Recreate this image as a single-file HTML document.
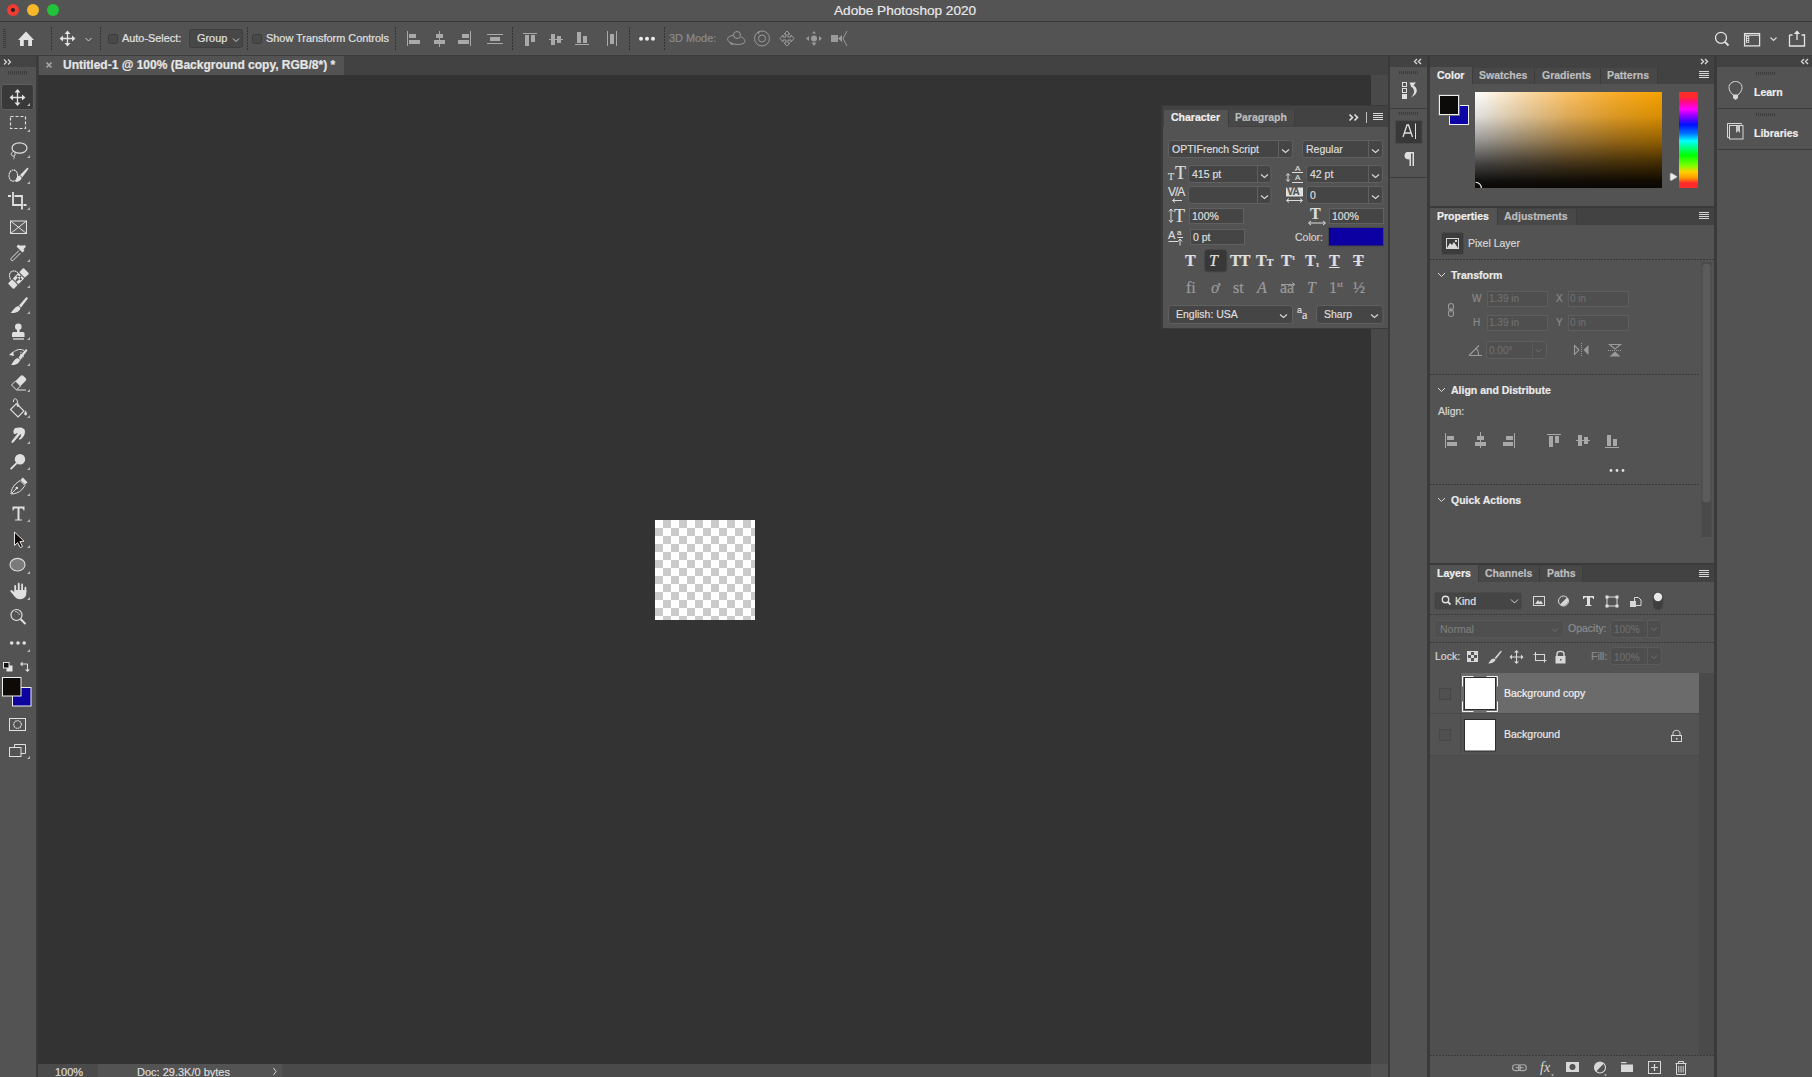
<!DOCTYPE html>
<html><head><meta charset="utf-8">
<style>
*{box-sizing:border-box;margin:0;padding:0}
html,body{width:1812px;height:1077px;overflow:hidden;background:#535353;font-family:"Liberation Sans",sans-serif;color:#d8d8d8}
.a{position:absolute}
.t{position:absolute;white-space:nowrap;font-size:11px;line-height:12px;z-index:2;-webkit-text-stroke:0.2px currentColor}
svg{position:absolute;overflow:visible}
</style></head><body>
<!-- title bar -->
<div class="a" style="left:0;top:0;width:1812px;height:21px;background:#545454"></div>
<div class="a" style="left:0;top:21px;width:1812px;height:1px;background:#383838"></div>
<div class="a" style="left:7px;top:4px;width:12px;height:12px;border-radius:50%;background:#f03c33"></div>
<div class="a" style="left:11px;top:8px;width:4px;height:4px;border-radius:50%;background:#222"></div>
<div class="a" style="left:27px;top:4px;width:12px;height:12px;border-radius:50%;background:#f6b72b"></div>
<div class="a" style="left:47px;top:4px;width:12px;height:12px;border-radius:50%;background:#22c23b"></div>
<div class="t" style="left:834px;top:4px;font-size:13.6px;line-height:14px;color:#e8e8e8">Adobe Photoshop 2020</div>

<!-- options bar -->
<div class="a" style="left:0;top:22px;width:1812px;height:33px;background:#535353"></div>
<div class="a" style="left:0;top:55px;width:1812px;height:1px;background:#3c3c3c"></div>


<!-- options content -->
<svg width="1812" height="34" style="left:0;top:22px" viewBox="0 22 1812 34">
<g fill="#3b3b3b"><rect x="3" y="29" width="3" height="1"/><rect x="3" y="31" width="3" height="1"/><rect x="3" y="33" width="3" height="1"/><rect x="3" y="35" width="3" height="1"/><rect x="3" y="37" width="3" height="1"/><rect x="3" y="39" width="3" height="1"/><rect x="3" y="41" width="3" height="1"/><rect x="3" y="43" width="3" height="1"/><rect x="3" y="45" width="3" height="1"/><rect x="3" y="47" width="3" height="1"/></g>
<path d="M26 31.5 L34 40 L32 40 L32 46 L28.2 46 L28.2 40 L23.8 40 L23.8 46 L20 46 L20 40 L18 40 Z" fill="#e2e2e2"/>
<g stroke="#333" stroke-width="1" stroke-dasharray="2 1"><line x1="51.5" y1="27" x2="51.5" y2="50"/><line x1="100.5" y1="27" x2="100.5" y2="50"/><line x1="247.5" y1="27" x2="247.5" y2="50"/><line x1="395.5" y1="27" x2="395.5" y2="50"/><line x1="512.5" y1="27" x2="512.5" y2="50"/><line x1="629.5" y1="27" x2="629.5" y2="50"/><line x1="664.5" y1="27" x2="664.5" y2="50"/></g>
<g fill="none" stroke="#e2e2e2" stroke-width="1.3"><path d="M67.5 32 V45 M61 38.5 H74"/></g>
<g fill="#e2e2e2"><path d="M67.5 30.5 L70.5 34 L64.5 34Z M67.5 46.5 L70.5 43 L64.5 43Z M59.5 38.5 L63 35.5 L63 41.5Z M75.5 38.5 L72 35.5 L72 41.5Z"/></g>
<path d="M85.5 38 L88.5 41 L91.5 38" fill="none" stroke="#d0d0d0" stroke-width="1"/>
<rect x="108.5" y="34.5" width="9" height="9" rx="2" fill="#4a4a4a" stroke="#3a3a3a"/>
<rect x="189.5" y="29.5" width="53" height="18" rx="2" fill="#474747" stroke="#3f3f3f"/>
<path d="M233 38.5 L236 41.5 L239 38.5" fill="none" stroke="#d0d0d0" stroke-width="1"/>
<rect x="252.5" y="34.5" width="9" height="9" rx="2" fill="#4a4a4a" stroke="#3a3a3a"/>
<g fill="#a9a9a9">
<rect x="407" y="31" width="1" height="15"/><rect x="409" y="34" width="7" height="4"/><rect x="409" y="40" width="11" height="4"/>
<rect x="439" y="31" width="1" height="16"/><rect x="436" y="34" width="7" height="4"/><rect x="434" y="40" width="11" height="4"/>
<rect x="470" y="31" width="1" height="15"/><rect x="462" y="34" width="7" height="4"/><rect x="458" y="40" width="11" height="4"/>
<rect x="487" y="34" width="16" height="1"/><rect x="487" y="43" width="16" height="1"/><rect x="490" y="37" width="10" height="4"/>
<rect x="523" y="33" width="14" height="1"/><rect x="525" y="35" width="4" height="11"/><rect x="531" y="35" width="4" height="7"/>
<rect x="549" y="39" width="14" height="1"/><rect x="551" y="34" width="4" height="11"/><rect x="557" y="36" width="4" height="7"/>
<rect x="575" y="44" width="14" height="1"/><rect x="577" y="32" width="4" height="11"/><rect x="583" y="36" width="4" height="7"/>
<rect x="607" y="31" width="1" height="15"/><rect x="616" y="31" width="1" height="15"/><rect x="610" y="34" width="4" height="10"/>
</g>
<g fill="#ececec"><circle cx="641" cy="38.8" r="2"/><circle cx="647" cy="38.8" r="2"/><circle cx="653" cy="38.8" r="2"/></g>
<g fill="none" stroke="#9a9a9a" stroke-width="1">
<circle cx="737" cy="35" r="3.5"/><path d="M733 35.5 C727 36 726 40 730 42.5 C733 45 742 45 744 43 C746 41 744 38 741 37"/>
<circle cx="762" cy="38.5" r="7.5"/><circle cx="762" cy="38.5" r="3.5"/>
<path d="M787 31 L790 34 H788 V37 H791 V35 L794 38.5 L791 42 V40 H788 V43 H790 L787 46 L784 43 H786 V40 H783 V42 L780 38.5 L783 35 V37 H786 V34 H784 Z"/>
<path d="M847 31 L843 38.5 L847 46"/>
</g>
<g fill="#9a9a9a"><path d="M730 42 L734 44 L731 45Z"/><path d="M757 33 L760 31 L759 34Z"/><circle cx="814" cy="38.5" r="3"/><path d="M814 31 L816 33.5 H812Z M814 46 L816.5 42.5 H811.5Z M806 38.5 L809 36 V41Z M822 38.5 L819 36 V41Z"/><rect x="831" y="35" width="7" height="7"/><path d="M838 38.5 L842 35 V42Z"/></g>
<g fill="none" stroke="#e2e2e2" stroke-width="1.3"><circle cx="1721" cy="37.8" r="5.5"/><path d="M1725 42 L1728.5 45.5" stroke-width="1.8"/>
<rect x="1744.6" y="33.6" width="15" height="12.3"/><path d="M1745 35.3 H1759.5" stroke-width="1"/>
<path d="M1789.5 35 V46 H1804.5 V35 H1801.5 M1792.5 35 H1789.5"/><path d="M1797 40 V31"/></g>
<path d="M1793.8 34 L1797 30.5 L1800.2 34Z" fill="#e2e2e2"/>
<path d="M1770.5 37.5 L1773.5 40.5 L1776.5 37.5" fill="none" stroke="#d8d8d8" stroke-width="1.2"/><rect x="1746" y="36" width="3.2" height="6.8" fill="#e0e0e0"/><g fill="#535353"><circle cx="1747.6" cy="37.4" r="0.75"/><circle cx="1747.6" cy="39.4" r="0.75"/><circle cx="1747.6" cy="41.4" r="0.75"/></g>
</svg>
<div class="t" style="left:122px;top:32px;font-size:10.9px;color:#e0e0e0">Auto-Select:</div>
<div class="t" style="left:197px;top:32px;font-size:10.9px;color:#e0e0e0">Group</div>
<div class="t" style="left:266px;top:32px;font-size:10.9px;color:#e0e0e0">Show Transform Controls</div>
<div class="t" style="left:669px;top:32px;font-size:10.9px;color:#8c8c8c">3D Mode:</div>

<!-- row below options -->
<div class="a" style="left:0;top:56px;width:1812px;height:19px;background:#424242"></div>

<!-- left toolbar -->
<div class="a" style="left:0;top:56px;width:36px;height:11px;background:#444"></div>
<div class="a" style="left:0;top:67px;width:36px;height:1010px;background:#535353"></div>
<div class="a" style="left:36px;top:56px;width:2px;height:1021px;background:#3a3a3a"></div>


<!-- toolbar content -->
<svg width="38" height="1021" style="left:0;top:56px" viewBox="0 56 38 1021">
<path d="M4 59.5 L6.5 62 L4 64.5 M8 59.5 L10.5 62 L8 64.5" fill="none" stroke="#d8d8d8" stroke-width="1.2"/>
<g fill="#3c3c3c"><rect x="8" y="71" width="1" height="3.5"/><rect x="10" y="71" width="1" height="3.5"/><rect x="12" y="71" width="1" height="3.5"/><rect x="14" y="71" width="1" height="3.5"/><rect x="16" y="71" width="1" height="3.5"/><rect x="18" y="71" width="1" height="3.5"/><rect x="20" y="71" width="1" height="3.5"/><rect x="22" y="71" width="1" height="3.5"/><rect x="24" y="71" width="1" height="3.5"/><rect x="26" y="71" width="1" height="3.5"/></g>
<rect x="1.5" y="84.5" width="32" height="25" rx="2.5" fill="#393939" stroke="#5e5e5e"/>
<path d="M27 106 L30 103 L30 106Z M27 132 L30 129 L30 132Z M27 158 L30 155 L30 158Z M27 184 L30 181 L30 184Z M27 210 L30 207 L30 210Z M27 262 L30 259 L30 262Z M27 288 L30 285 L30 288Z M27 314 L30 311 L30 314Z M27 340 L30 337 L30 340Z M27 366 L30 363 L30 366Z M27 392 L30 389 L30 392Z M27 418 L30 415 L30 418Z M27 444 L30 441 L30 444Z M27 470 L30 467 L30 470Z M27 496 L30 493 L30 496Z M27 522 L30 519 L30 522Z M27 548 L30 545 L30 548Z M27 574 L30 571 L30 574Z M27 600 L30 597 L30 600Z M27 652 L30 649 L30 652Z M27 759 L30 756 L30 759Z" fill="#b8b8b8"/>
<g fill="none" stroke="#e0e0e0" stroke-width="1.3">
<path d="M17.5 91 V104 M11 97.5 H24"/>
<rect x="10.5" y="116.5" width="15" height="12" stroke-dasharray="3 2" stroke-width="1.2"/>
<ellipse cx="19.5" cy="148" rx="7.5" ry="5.2" stroke-width="1.2"/><path d="M13.5 151.5 C10.5 152.5 10.5 156 13.5 156 C15.5 156 15.5 154 14.5 153 M13.8 156 C14.5 157 14.5 158.5 13.5 159" stroke-width="1"/>
<ellipse cx="13.3" cy="175.6" rx="4.3" ry="5.6" stroke-dasharray="0.9 1.5" stroke-width="1.2" stroke-linecap="round"/>
<path d="M8 196 H11 M13 192 V205 H21.5 M14.5 196 H22 V209.5 M23.5 205 H26.5" stroke-width="1.8"/>
<rect x="10.5" y="221" width="16" height="12.5" fill="#5c5c5c" stroke-width="1"/><path d="M10.5 221 L26.5 233.5 M26.5 221 L10.5 233.5" stroke-width="1"/>
<path d="M19 250.5 L11.5 258 C10 259.5 11.5 261.5 13 260.5 L20.5 253" stroke-width="1"/>
<path d="M10.5 279 C8.5 276 9.5 271.5 13 271 C15 270.8 16.5 271.5 17.5 272.5" stroke-dasharray="0.9 1.5" stroke-width="1.2" stroke-linecap="round"/>
<path d="M24 350.5 C21 348.5 16 349.5 13 352.5" stroke-width="1"/>
<path d="M13 349 V362" stroke="none"/>
<path d="M21 352 L20 360 M23.5 356 L22 358" stroke-dasharray="0.8 1.6" stroke-width="1.1" stroke-linecap="round" stroke="#d0d0d0"/>
<path d="M11.5 385 L15.5 381 L20.5 386 L16.5 390 Z M16.5 390 H26" stroke-width="1"/>
<path d="M10.5 409.5 L16.5 403.5 L24 411 L18 417 Z" stroke-width="1.1"/><path d="M13.5 402 C13 399 15.5 397.5 17 400 L18 404" stroke-width="1"/>
<path d="M11 494 C11 490 13 486.5 15.5 484 L20 480.5 L25 485.5 L21.5 490 C19 492.5 15 494 11 494Z M11.5 493.5 L17.5 487.5" stroke-width="1"/>
<circle cx="16.5" cy="615" r="5.5" stroke-width="1.2"/><path d="M20.5 619 L25.5 624" stroke-width="2"/><path d="M15 611.5 C17 611.5 19 613 19.5 615" stroke-width="0.8"/>
<rect x="9.5" y="718.5" width="16" height="12" stroke-width="1"/><circle cx="17.5" cy="724.5" r="3.8" stroke-dasharray="0.8 1.4" stroke-width="1.1" stroke-linecap="round"/>
<path d="M14.5 747 V744.5 H25.5 V753.5 H21" stroke-width="1"/><rect x="9.5" y="747.5" width="11.5" height="9" stroke-width="1"/>
<path d="M21 664 H27.5 V670" stroke-width="1"/>
</g>
<g fill="#e0e0e0">
<path d="M17.5 89 L20.5 92.5 H14.5Z M17.5 106 L20.5 102.5 H14.5Z M9.5 97.5 L13 94.5 V100.5Z M25.5 97.5 L22 94.5 V100.5Z"/>
<path d="M26.8 168.2 C27.8 167.2 29 168.6 28 169.6 L22.3 177.2 L20 175 Z M19.5 175.5 L21.8 177.8 C21 181 18 182.3 15.5 181.8 C16 179.5 17 176 19.5 175.5Z"/>
<path d="M24 245.5 C25 244.5 26.5 246 25.5 247 L23.5 249.5 L24.5 250.5 L22.5 252.5 L16.5 246.5 L18.5 244.5 L19.5 245.5Z"/>
<g transform="rotate(-45 18.5 278.5)"><rect x="7.5" y="274.5" width="6" height="8" rx="1"/><rect x="23.5" y="274.5" width="6" height="8" rx="1"/><path d="M14.5 274.5 H22.5 V282.5 H14.5Z M16.5 277.5 V279.5 H18.5 V277.5Z M18.5 279.5 V281.5 H20.5 V279.5Z M18.5 275.5 V277.5 H20.5 V275.5Z M20.5 277.5 V279.5 H22 V277.5Z M15 277.5 V279.5 H16.5 V277.5Z" fill-rule="evenodd"/></g>
<path d="M26 297.5 C27 296.5 28.5 298 27.5 299 L21 307.5 L19 305.5 Z M18.5 306 L20.5 308 C20 311.5 15.5 313.5 10.5 313 C13 311 14 307 18.5 306Z"/>
<circle cx="18.3" cy="326.8" r="3.3"/><rect x="17" y="329" width="2.6" height="4"/><path d="M12 333.5 C12 332.5 13 332 14 332 H22.5 C23.5 332 24.5 332.5 24.5 333.5 V337 H12Z"/><rect x="13" y="338.3" width="11" height="1.3"/>
<path d="M25.5 349.5 C26.5 348.5 28 350 27 351 L20.5 359.5 L18.5 357.5 Z M18 358 L20 360 C19.5 363.5 15 365.5 11 365 C13 363 13.5 359 18 358Z"/>
<path d="M9 355 L13 351.5 L14 356 Z"/>
<path d="M15.5 381 L20.5 376 C21.5 375 22.5 375 23.5 376 L25.5 378 C26.5 379 26.5 380 25.5 381 L20.5 386 Z"/>
<path d="M25.5 410.5 C27 412.5 27.5 414 26.5 415 C25.5 416 24 415 24.2 413.5 Z"/><circle cx="18" cy="405.5" r="1.3"/>
<path d="M15.5 428 C18 427 23 427 24.5 429.5 C26 432.5 24 437 21 439 C19.5 440 18.5 439.5 19 438.5 C21 437 21.5 434.5 20.5 434 L15.5 440 C13.5 442.5 12 443.5 11.5 442.5 C11 441.5 12.5 440 14.5 437.5 L18 433 C16.5 433 15 434.5 14.5 434 C13 433.5 13 429 15.5 428Z"/>
<circle cx="20" cy="459.2" r="5.2"/><path d="M16 462.5 L10 468.5 L11.3 469.8 L17.3 463.8Z"/>
<path d="M20.5 480 L22.8 477.5 L27.5 482.2 L25 484.5Z"/>
<circle cx="16.8" cy="488" r="1.3"/>
<path d="M12.5 506.5 H24.5 V510.5 H23.5 C23.2 509 22.5 508.5 21.5 508.5 H19.5 V519.5 H22 V520.5 H15 V519.5 H17.5 V508.5 H15.5 C14.5 508.5 13.8 509 13.5 510.5 H12.5Z"/>
<path d="M14.2 590 H26.3 V593 C26.3 597 23.6 599.2 20.2 599.2 C17 599.2 15 597.5 13 594.5 L10.5 591.5 C10 590.5 11 589.5 12 590.2 L14.2 592Z"/><path d="M14.3 590 V586.2 C14.3 584.6 16.1 584.6 16.1 586.2 V591 Z M17.8 590 V584 C17.8 582.4 19.7 582.4 19.7 584 V591Z M21.2 590 V584.8 C21.2 583.2 23 583.2 23 584.8 V591Z M24.5 591 V588 C24.5 586.4 26.3 586.4 26.3 588 V592Z"/>
<circle cx="11.7" cy="643" r="1.8"/><circle cx="18" cy="643" r="1.8"/><circle cx="24.2" cy="643" r="1.8"/>
<path d="M20 664 L22.5 661.5 V666.5Z M27.5 672 L25 669.5 H30Z"/>
</g>
<path d="M14.5 532 V545.5 L17.6 542.6 L20.3 547.6 L22.5 546.5 L19.9 541.6 L24 541.2Z" fill="#0f0c0a" stroke="#e6e6e6" stroke-width="1" stroke-linejoin="round"/>
<ellipse cx="17.5" cy="564.7" rx="7.5" ry="6.3" fill="#7a7a7a" stroke="#dcdcdc" stroke-width="1.1"/>
<rect x="6.5" y="665.5" width="6" height="6" fill="#e4e4e4"/><rect x="3.5" y="662.5" width="5.5" height="5.5" fill="#111" stroke="#e4e4e4"/>
<rect x="12.5" y="687.5" width="18.5" height="18.5" fill="#0d04a0" stroke="#eeeeee"/>
<rect x="2.5" y="677.5" width="18.5" height="18.5" fill="#0d0a08" stroke="#f0f0f0"/>
</svg>

<!-- doc tab -->
<div class="a" style="left:39px;top:56px;width:305px;height:19px;background:#535353"></div>

<!-- canvas -->
<div class="a" style="left:38px;top:75px;width:1333px;height:989px;background:#333333"></div>
<div class="a" style="left:1371px;top:75px;width:17px;height:989px;background:#494949"></div>
<svg width="10" height="10" style="left:44px;top:60px" viewBox="44 60 10 10"><path d="M46.5 62.5 L51.5 67.5 M51.5 62.5 L46.5 67.5" stroke="#a8a8a8" stroke-width="1.6"/></svg>
<div class="t" style="left:63px;top:59px;font-size:12px;font-weight:bold;color:#e6e6e6">Untitled-1 @ 100% (Background copy, RGB/8*) *</div>
<div class="a" style="left:655px;top:520px;width:100px;height:100px;background:repeating-conic-gradient(#cbcbcb 0 25%,#ffffff 0 50%) 0 0/16px 16px"></div>

<!-- status bar -->
<div class="a" style="left:38px;top:1064px;width:1350px;height:13px;background:#4a4a4a"></div>

<div class="a" style="left:98px;top:1064px;width:184px;height:13px;background:#535353"></div><div class="a" style="left:1371px;top:1064px;width:17px;height:13px;background:#525252"></div>
<div class="t" style="left:55px;top:1066px;font-size:11px;color:#dcdcdc">100%</div>
<div class="t" style="left:137px;top:1066px;font-size:11px;color:#dcdcdc">Doc: 29.3K/0 bytes</div>
<svg width="10" height="13" style="left:270px;top:1064px" viewBox="270 1064 10 13"><path d="M273.5 1068 L276 1071.5 L273.5 1075" fill="none" stroke="#cfcfcf" stroke-width="1"/></svg>
<div class="a" style="left:1388px;top:56px;width:2px;height:1021px;background:#3a3a3a"></div>

<!-- icon dock -->
<div class="a" style="left:1390px;top:67px;width:37px;height:1010px;background:#535353"></div>
<div class="a" style="left:1427px;top:56px;width:3px;height:1021px;background:#3a3a3a"></div>

<!-- right panels -->
<div class="a" style="left:1430px;top:67px;width:284px;height:1010px;background:#535353"></div>
<div class="a" style="left:1714px;top:56px;width:3px;height:1021px;background:#3a3a3a"></div>
<div class="a" style="left:1717px;top:67px;width:95px;height:1010px;background:#535353"></div>


<!-- dock + right headers -->
<svg width="422" height="22" style="left:1390px;top:55px" viewBox="1390 55 422 22">
<g fill="none" stroke="#d8d8d8" stroke-width="1.4">
<path d="M1417 59 L1414.5 61.5 L1417 64 M1421 59 L1418.5 61.5 L1421 64"/>
<path d="M1701 59 L1703.5 61.5 L1701 64 M1705 59 L1707.5 61.5 L1705 64"/>
<path d="M1804 59 L1801.5 61.5 L1804 64 M1808 59 L1805.5 61.5 L1808 64"/>
</g></svg>
<div class="a" style="left:1390px;top:108px;width:37px;height:1px;background:#3a3a3a"></div>
<div class="a" style="left:1390px;top:177px;width:37px;height:1px;background:#3a3a3a"></div>
<svg width="37" height="120" style="left:1390px;top:67px" viewBox="1390 67 37 120">
<g fill="#3c3c3c"><rect x="1399" y="71" width="1" height="3"/><rect x="1401" y="71" width="1" height="3"/><rect x="1403" y="71" width="1" height="3"/><rect x="1405" y="71" width="1" height="3"/><rect x="1407" y="71" width="1" height="3"/><rect x="1409" y="71" width="1" height="3"/><rect x="1411" y="71" width="1" height="3"/><rect x="1413" y="71" width="1" height="3"/><rect x="1415" y="71" width="1" height="3"/><rect x="1417" y="71" width="1" height="3"/>
<rect x="1399" y="112" width="1" height="3"/><rect x="1401" y="112" width="1" height="3"/><rect x="1403" y="112" width="1" height="3"/><rect x="1405" y="112" width="1" height="3"/><rect x="1407" y="112" width="1" height="3"/><rect x="1409" y="112" width="1" height="3"/><rect x="1411" y="112" width="1" height="3"/><rect x="1413" y="112" width="1" height="3"/><rect x="1415" y="112" width="1" height="3"/><rect x="1417" y="112" width="1" height="3"/></g>
<g fill="none" stroke="#dedede" stroke-width="1"><rect x="1402.5" y="82.5" width="4" height="4"/><rect x="1402.5" y="88.5" width="4" height="4"/></g>
<rect x="1402" y="94" width="5" height="5" fill="#dedede"/>
<path d="M1409.5 82.5 L1416 82.5 L1411.5 87.5 Z M1412.5 84.5 C1418.5 88 1418.5 94 1411 97.5 C1415 93.5 1415 89.5 1411.5 86.5 Z" fill="#dedede"/>
<rect x="1395.5" y="120.5" width="26.5" height="23" fill="#383838" stroke="#4a4a4a"/>
<path d="M1403 137 L1407 125 H1408.5 L1412.5 137 M1404.5 133 H1411" fill="none" stroke="#e0e0e0" stroke-width="1.3"/>
<path d="M1415.5 123.5 V139" stroke="#e0e0e0" stroke-width="1"/>
<path d="M1407 152 H1414 V166 H1412.5 V153.5 H1411 V166 H1409.5 V159.5 C1406 159.5 1404.5 158 1404.5 155.8 C1404.5 153.5 1406 152 1407 152Z" fill="#dedede"/>
</svg>

<!-- COLOR panel -->
<div class="a" style="left:1430px;top:67px;width:284px;height:17px;background:#424242"></div>
<div class="a" style="left:1430px;top:67px;width:42px;height:17px;background:#535353"></div>
<div class="a" style="left:1472px;top:68px;width:185px;height:16px;background:#484848;border-left:1px solid #3d3d3d"></div>
<div class="a" style="left:1534px;top:68px;width:1px;height:16px;background:#3d3d3d"></div>
<div class="a" style="left:1600px;top:68px;width:1px;height:16px;background:#3d3d3d"></div>
<div class="a" style="left:1657px;top:68px;width:1px;height:16px;background:#3d3d3d"></div>
<div class="t" style="left:1437px;top:69px;font-size:10.5px;font-weight:bold;color:#efefef">Color</div>
<div class="t" style="left:1479px;top:69px;font-size:10.5px;font-weight:bold;color:#bdbdbd">Swatches</div>
<div class="t" style="left:1542px;top:69px;font-size:10.5px;font-weight:bold;color:#bdbdbd">Gradients</div>
<div class="t" style="left:1607px;top:69px;font-size:10.5px;font-weight:bold;color:#bdbdbd">Patterns</div>
<div class="a" style="left:1430px;top:206px;width:284px;height:2px;background:#3a3a3a"></div>
<div class="a" style="left:1475px;top:92px;width:187px;height:96px;background:linear-gradient(to bottom,rgba(0,0,0,0) 0%,rgba(0,0,0,.12) 25%,rgba(0,0,0,.4) 50%,rgba(0,0,0,.74) 75%,rgba(0,0,0,.93) 92%,#0a0604 100%),linear-gradient(to right,#ffffff 0%,#f9dcae 25%,#fbc062 50%,#f8ac28 75%,#f6a100 100%)"></div>
<div class="a" style="left:1679px;top:92px;width:19px;height:96px;background:linear-gradient(to bottom,#ff2a2a 0%,#ff2a2a 5%,#ff0a80 10%,#ff00ff 18%,#8000ff 26%,#0010ff 34%,#0070ff 43%,#00ffff 51%,#00ff80 58%,#00ff00 66%,#80ff00 77%,#ffd000 83%,#ffa000 89%,#ff2a2a 95%,#ff2a2a 100%)"></div>
<svg width="284" height="140" style="left:1430px;top:67px" viewBox="1430 67 284 140">
<g fill="#d8d8d8"><rect x="1699" y="71" width="10" height="1"/><rect x="1699" y="73" width="10" height="1"/><rect x="1699" y="75" width="10" height="1"/><rect x="1699" y="77" width="10" height="1"/></g>
<rect x="1449.5" y="105.5" width="19" height="19" fill="#0d04a6" stroke="#eeeeee"/>
<rect x="1438.5" y="94.5" width="21" height="21" fill="#0d0b0a" stroke="#6a6a6a"/>
<rect x="1439.5" y="95.5" width="19" height="19" fill="#0d0b0a" stroke="#eeeeee"/>
<path d="M1475.5 182.2 A5.8 5.8 0 0 1 1481.3 188" fill="none" stroke="#eeeeee" stroke-width="1.1"/>
<path d="M1670 174.2 Q1670 172.4 1671.8 173.2 L1676.6 176 Q1677.8 176.8 1676.6 177.6 L1671.8 180.4 Q1670 181.2 1670 179.4 Z" fill="#ececec" stroke="#8a8a8a" stroke-width="0.7"/>
</svg>
<!-- PROPERTIES -->
<div class="a" style="left:1430px;top:208px;width:284px;height:17px;background:#424242"></div>
<div class="a" style="left:1430px;top:208px;width:67px;height:17px;background:#535353"></div>
<div class="a" style="left:1497px;top:209px;width:80px;height:16px;background:#484848;border-left:1px solid #3d3d3d;border-right:1px solid #3d3d3d"></div>
<div class="t" style="left:1437px;top:210px;font-size:10.5px;font-weight:bold;color:#efefef">Properties</div>
<div class="t" style="left:1504px;top:210px;font-size:10.5px;font-weight:bold;color:#bdbdbd">Adjustments</div>
<div class="t" style="left:1468px;top:237px;font-size:10.5px;color:#d8d8d8">Pixel Layer</div>
<div class="t" style="left:1451px;top:269px;font-size:10.5px;font-weight:bold;color:#eaeaea">Transform</div>
<div class="t" style="left:1451px;top:384px;font-size:10.5px;font-weight:bold;color:#eaeaea">Align and Distribute</div>
<div class="t" style="left:1438px;top:405px;font-size:10.5px;color:#d8d8d8">Align:</div>
<div class="t" style="left:1451px;top:494px;font-size:10.5px;font-weight:bold;color:#eaeaea">Quick Actions</div>
<div class="t" style="left:1472px;top:293px;font-size:10px;color:#8a8a8a">W</div>
<div class="t" style="left:1473px;top:317px;font-size:10px;color:#8a8a8a">H</div>
<div class="t" style="left:1556px;top:293px;font-size:10px;color:#8a8a8a">X</div>
<div class="t" style="left:1556px;top:317px;font-size:10px;color:#8a8a8a">Y</div>
<div class="t" style="left:1489px;top:293px;font-size:10px;color:#6e6e6e">1.39 in</div>
<div class="t" style="left:1489px;top:317px;font-size:10px;color:#6e6e6e">1.39 in</div>
<div class="t" style="left:1570px;top:293px;font-size:10px;color:#6e6e6e">0 in</div>
<div class="t" style="left:1570px;top:317px;font-size:10px;color:#6e6e6e">0 in</div>
<div class="t" style="left:1489px;top:345px;font-size:10px;color:#6e6e6e">0.00&#xb0;</div>
<svg width="284" height="340" style="left:1430px;top:208px" viewBox="1430 208 284 340">
<g fill="#d8d8d8"><rect x="1699" y="212" width="10" height="1"/><rect x="1699" y="214" width="10" height="1"/><rect x="1699" y="216" width="10" height="1"/><rect x="1699" y="218" width="10" height="1"/></g>
<rect x="1441.5" y="232.5" width="22" height="22" rx="2" fill="#3c3c3c" stroke="#4a4a4a"/>
<rect x="1446.5" y="238.5" width="12" height="10" fill="none" stroke="#d8d8d8"/>
<path d="M1447 248 L1450 243 L1452 245 L1454 242 L1458 248Z" fill="#d8d8d8"/><rect x="1455" y="240" width="2" height="2" fill="#d8d8d8"/>
<g stroke="#3a3a3a" stroke-dasharray="2 1"><path d="M1430 259.5 H1714 M1430 374.5 H1700 M1430 484.5 H1700"/></g>
<rect x="1701.5" y="262" width="10" height="275" fill="#4a4a4a"/>
<rect x="1702.5" y="263.5" width="8" height="239" rx="4" fill="#5b5b5b"/>
<g fill="none" stroke="#d8d8d8" stroke-width="1"><path d="M1438 273 L1441.5 276.5 L1445 273 M1438 388 L1441.5 391.5 L1445 388 M1438 498 L1441.5 501.5 L1445 498"/></g>
<g fill="#4f4f4f" stroke="#5e5e5e"><rect x="1487.5" y="291.5" width="60" height="15"/><rect x="1568.5" y="291.5" width="60" height="15"/><rect x="1487.5" y="315.5" width="60" height="15"/><rect x="1568.5" y="315.5" width="60" height="15"/><rect x="1486.5" y="341.5" width="60" height="17" rx="3"/></g>
<path d="M1532.5 342 V358" stroke="#5a5a5a"/>
<path d="M1535.5 349 L1538.5 352 L1541.5 349" fill="none" stroke="#6e6e6e"/>
<g fill="none" stroke="#9a9a9a" stroke-width="1.1"><rect x="1448.5" y="303.5" width="5" height="6.5" rx="2.5"/><rect x="1448.5" y="310" width="5" height="6.5" rx="2.5"/><path d="M1451 307.5 V312.5"/>
<path d="M1469 355.5 H1482 M1469 355.5 L1479 345.5 M1476 348.5 C1478 350 1478.5 352 1478.5 355"/>
<path d="M1574.5 345.5 L1579 350 L1574.5 354.5Z"/><path d="M1581.5 343 V357" stroke-dasharray="1 1"/>
<path d="M1609.5 344.5 H1620.5 L1615 349Z"/>
</g>
<path d="M1588.5 345 L1583.5 350 L1588.5 355Z" fill="#9a9a9a"/>
<path d="M1609.5 356.5 H1620.5 L1615 351.5Z" fill="#9a9a9a"/><path d="M1608 350.5 H1622" stroke="#9a9a9a" stroke-dasharray="1 1"/>
<g fill="#a8a8a8">
<rect x="1445" y="433" width="1" height="15"/><rect x="1447" y="436" width="7" height="4"/><rect x="1447" y="442" width="10" height="4"/>
<rect x="1480" y="432" width="1" height="16"/><rect x="1477" y="436" width="7" height="4"/><rect x="1475" y="442" width="11" height="4"/>
<rect x="1514" y="433" width="1" height="15"/><rect x="1506" y="436" width="7" height="4"/><rect x="1503" y="442" width="10" height="4"/>
<rect x="1547" y="434" width="14" height="1"/><rect x="1549" y="436" width="4" height="11"/><rect x="1555" y="436" width="4" height="7"/>
<rect x="1576" y="440" width="14" height="1"/><rect x="1578" y="435" width="4" height="11"/><rect x="1584" y="437" width="4" height="7"/>
<rect x="1605" y="447" width="14" height="1"/><rect x="1607" y="435" width="4" height="11"/><rect x="1613" y="439" width="4" height="7"/>
</g>
<g fill="#e0e0e0"><circle cx="1611" cy="470.5" r="1.4"/><circle cx="1617" cy="470.5" r="1.4"/><circle cx="1623" cy="470.5" r="1.4"/></g>
</svg>


<!-- LEARN / LIBRARIES -->
<div class="a" style="left:1717px;top:108px;width:95px;height:1px;background:#3a3a3a"></div>
<div class="a" style="left:1717px;top:149px;width:95px;height:1px;background:#3a3a3a"></div>
<div class="t" style="left:1754px;top:86px;font-size:10.5px;font-weight:bold;color:#eeeeee">Learn</div>
<div class="t" style="left:1754px;top:127px;font-size:10.5px;font-weight:bold;color:#eeeeee">Libraries</div>
<svg width="95" height="90" style="left:1717px;top:67px" viewBox="1717 67 95 90">
<g fill="#3c3c3c"><rect x="1756" y="72" width="1" height="3"/><rect x="1758" y="72" width="1" height="3"/><rect x="1760" y="72" width="1" height="3"/><rect x="1762" y="72" width="1" height="3"/><rect x="1764" y="72" width="1" height="3"/><rect x="1766" y="72" width="1" height="3"/><rect x="1768" y="72" width="1" height="3"/><rect x="1770" y="72" width="1" height="3"/><rect x="1772" y="72" width="1" height="3"/><rect x="1774" y="72" width="1" height="3"/>
<rect x="1756" y="113" width="1" height="3"/><rect x="1758" y="113" width="1" height="3"/><rect x="1760" y="113" width="1" height="3"/><rect x="1762" y="113" width="1" height="3"/><rect x="1764" y="113" width="1" height="3"/><rect x="1766" y="113" width="1" height="3"/><rect x="1768" y="113" width="1" height="3"/><rect x="1770" y="113" width="1" height="3"/><rect x="1772" y="113" width="1" height="3"/><rect x="1774" y="113" width="1" height="3"/></g>
<path d="M1733 95 C1730 92 1729 90 1729 87.5 C1729 84 1732 81.5 1735.5 81.5 C1739 81.5 1742 84 1742 87.5 C1742 90 1741 92 1738 95" fill="none" stroke="#d8d8d8" stroke-width="1"/>
<path d="M1733 94.5 H1738 V98 L1735.5 100 L1733 98Z" fill="#d8d8d8"/>
<g fill="none" stroke="#d8d8d8" stroke-width="1"><path d="M1741.5 124.5 V123.5 H1727.5 V137.5 H1729.5"/><rect x="1729.5" y="125.5" width="13.5" height="13.5"/></g>
<path d="M1736 126 H1740 V133 L1738 131 L1736 133Z" fill="#c8c8c8"/>
</svg>
<!-- LAYERS -->
<div class="a" style="left:1430px;top:563px;width:284px;height:2px;background:#3a3a3a"></div>
<div class="a" style="left:1430px;top:565px;width:284px;height:17px;background:#424242"></div>
<div class="a" style="left:1430px;top:565px;width:48px;height:17px;background:#535353"></div>
<div class="a" style="left:1478px;top:566px;width:105px;height:16px;background:#484848;border-left:1px solid #3d3d3d;border-right:1px solid #3d3d3d"></div>
<div class="a" style="left:1539px;top:566px;width:1px;height:16px;background:#3d3d3d"></div>
<div class="t" style="left:1437px;top:567px;font-size:10.5px;font-weight:bold;color:#efefef">Layers</div>
<div class="t" style="left:1485px;top:567px;font-size:10.5px;font-weight:bold;color:#bdbdbd">Channels</div>
<div class="t" style="left:1547px;top:567px;font-size:10.5px;font-weight:bold;color:#bdbdbd">Paths</div>
<div class="a" style="left:1430px;top:673px;width:269px;height:382px;background:#4f4f4f"></div>
<div class="a" style="left:1699px;top:673px;width:15px;height:382px;background:#4a4a4a"></div>
<div class="a" style="left:1430px;top:673px;width:269px;height:82px;background:#535353"></div>
<div class="a" style="left:1461px;top:673px;width:238px;height:40px;background:#6b6b6b"></div>
<div class="t" style="left:1455px;top:595px;font-size:10.5px;color:#e0e0e0">Kind</div>
<div class="t" style="left:1440px;top:623px;font-size:10.5px;color:#7c7c7c">Normal</div>
<div class="t" style="left:1568px;top:622px;font-size:10.5px;color:#8c8c8c">Opacity:</div>
<div class="t" style="left:1614px;top:624px;font-size:10px;color:#6c6c6c">100%</div>
<div class="t" style="left:1435px;top:650px;font-size:10.5px;color:#d8d8d8">Lock:</div>
<div class="t" style="left:1591px;top:650px;font-size:10.5px;color:#8c8c8c">Fill:</div>
<div class="t" style="left:1614px;top:652px;font-size:10px;color:#6c6c6c">100%</div>
<div class="t" style="left:1504px;top:687px;font-size:10.5px;color:#f0f0f0">Background copy</div>
<div class="t" style="left:1504px;top:728px;font-size:10.5px;color:#e8e8e8">Background</div>
<svg width="284" height="520" style="left:1430px;top:557px" viewBox="1430 557 284 520">
<g fill="#d8d8d8"><rect x="1699" y="570" width="10" height="1"/><rect x="1699" y="572" width="10" height="1"/><rect x="1699" y="574" width="10" height="1"/><rect x="1699" y="576" width="10" height="1"/></g>
<rect x="1434.5" y="592.5" width="87" height="17" rx="2" fill="#454545" stroke="#4b4b4b"/>
<circle cx="1445.5" cy="599.5" r="3.2" fill="none" stroke="#e0e0e0" stroke-width="1.4"/><path d="M1447.8 601.8 L1450.5 604.5" stroke="#e0e0e0" stroke-width="1.8"/>
<path d="M1511 599.5 L1514.5 603 L1518 599.5" fill="none" stroke="#d8d8d8"/>
<g fill="none" stroke="#d8d8d8" stroke-width="1"><rect x="1533.5" y="596.5" width="11" height="9"/><circle cx="1563.5" cy="601" r="5"/><rect x="1607" y="597" width="10" height="9"/></g>
<path d="M1535 604 L1538 600 L1539.5 602 L1541 600.5 L1543 604Z" fill="#d8d8d8"/>
<path d="M1567 597.5 A5 5 0 0 1 1560 604.5 Z" fill="#d8d8d8"/>
<path d="M1583 596 H1594 V599 H1593 C1593 598 1592.5 597.5 1591.5 597.5 H1590 V605 H1591.5 V606 H1585.5 V605 H1587 V597.5 H1585.5 C1584.5 597.5 1584 598 1584 599 H1583Z" fill="#e0e0e0"/>
<g fill="#e0e0e0"><rect x="1605.5" y="595.5" width="3" height="3"/><rect x="1615.5" y="595.5" width="3" height="3"/><rect x="1605.5" y="604.5" width="3" height="3"/><rect x="1615.5" y="604.5" width="3" height="3"/></g>
<path d="M1634.5 597.5 H1638.5 L1641 600 V605.5 H1634.5Z" fill="none" stroke="#d8d8d8"/><rect x="1630" y="601" width="6" height="6" fill="#d8d8d8"/>
<rect x="1653" y="592" width="10" height="18" rx="5" fill="#3f3f3f" stroke="#4a4a4a"/><circle cx="1658" cy="597" r="4.2" fill="#e8e8e8"/>
<g stroke="#3b3b3b" stroke-dasharray="2 1"><path d="M1430 614.5 H1714 M1430 642.5 H1714 M1430 1055.5 H1714"/></g>
<rect x="1434.5" y="620.5" width="129" height="17" rx="2" fill="#4f4f4f" stroke="#575757"/>
<path d="M1552 628.5 L1555 631.5 L1558 628.5" fill="none" stroke="#6f6f6f"/>
<rect x="1610.5" y="620.5" width="51" height="17" rx="3" fill="#4d4d4d" stroke="#5a5a5a"/><path d="M1647.5 621 V637" stroke="#5a5a5a"/>
<path d="M1651 627.5 L1654 630.5 L1657 627.5" fill="none" stroke="#6f6f6f"/>
<rect x="1610.5" y="647.5" width="51" height="17" rx="3" fill="#4d4d4d" stroke="#5a5a5a"/><path d="M1647.5 648 V664" stroke="#5a5a5a"/>
<path d="M1651 655.5 L1654 658.5 L1657 655.5" fill="none" stroke="#6f6f6f"/>
<rect x="1467.5" y="651.5" width="10" height="10" fill="none" stroke="#d8d8d8"/>
<g fill="#d8d8d8"><rect x="1468" y="652" width="3" height="3"/><rect x="1474" y="652" width="3" height="3"/><rect x="1471" y="655" width="3" height="3"/><rect x="1468" y="658" width="3" height="3"/><rect x="1474" y="658" width="3" height="3"/></g>
<path d="M1500.5 651 C1501 650.5 1502 651 1501.5 652 L1496 659 L1494.5 658 Z M1494 658.5 L1495.5 659.5 C1495 662 1492 663.5 1488 663.5 C1490 662 1490 659 1494 658.5Z" fill="#d8d8d8"/>
<g fill="none" stroke="#d8d8d8" stroke-width="1.1"><path d="M1516.5 651 V663 M1510.5 657 H1522.5"/><path d="M1533.5 654.5 H1544.5 V662.5 M1535.5 652 V660.5 H1546.5 M1533.5 654.5 L1535.5 654.5" /></g>
<g fill="#d8d8d8"><path d="M1516.5 650 L1519 652.5 H1514Z M1516.5 664 L1519 661.5 H1514Z M1509.5 657 L1512 654.5 V659.5Z M1523.5 657 L1521 654.5 V659.5Z"/></g>
<path d="M1557 656 V654 C1557 650.5 1564 650.5 1564 654 V656" fill="none" stroke="#d8d8d8" stroke-width="1.4"/><rect x="1555.5" y="656" width="10" height="7.5" fill="#d8d8d8"/><rect x="1560" y="659" width="1.5" height="1.5" fill="#535353"/>
<path d="M1460.5 673 V755" stroke="#4a4a4a"/><path d="M1430 713.5 H1699 M1430 755.5 H1699" stroke="#4a4a4a"/>
<rect x="1439.5" y="688.5" width="11" height="11" fill="#505050" stroke="#474747"/>
<rect x="1439.5" y="729.5" width="11" height="11" fill="#505050" stroke="#474747"/>
<rect x="1464.5" y="677.5" width="31" height="32" fill="#ffffff" stroke="#2e2e2e"/>
<g fill="none" stroke="#f4f4f4" stroke-width="1"><path d="M1473.5 676.5 H1462.5 V686.5 M1486.5 676.5 H1497.5 V686.5 M1462.5 701.5 V711.5 H1473.5 M1497.5 701.5 V711.5 H1486.5"/></g>
<rect x="1464.5" y="719.5" width="31" height="31.5" fill="#ffffff" stroke="#2e2e2e"/>
<path d="M1673 735 V733 C1673 729.5 1680 729.5 1680 733 V735" fill="none" stroke="#d8d8d8" stroke-width="1"/><rect x="1671.5" y="735.5" width="10" height="6" fill="none" stroke="#d8d8d8"/><rect x="1676" y="738" width="1.5" height="1.5" fill="#d8d8d8"/>
<g fill="none" stroke="#a8a8a8" stroke-width="1.1"><rect x="1512.5" y="1064.8" width="8" height="5.8" rx="2.9"/><rect x="1518.3" y="1064.8" width="8" height="5.8" rx="2.9"/><path d="M1515.5 1067.7 H1523.5"/></g>
<text x="1540" y="1072" font-family="Liberation Serif" font-style="italic" font-size="14" fill="#d8d8d8">fx</text>
<path d="M1551 1074.5 H1554 L1552.5 1076Z" fill="#d8d8d8"/>
<rect x="1566" y="1062" width="13" height="10" fill="#d8d8d8"/><circle cx="1572.5" cy="1067" r="3" fill="#535353"/>
<circle cx="1600" cy="1067.5" r="5.5" fill="none" stroke="#d8d8d8" stroke-width="1.1"/><path d="M1603.9 1063.6 A5.5 5.5 0 0 1 1596.1 1071.4 Z" fill="#d8d8d8" transform="rotate(180 1600 1067.5)"/>
<path d="M1604 1074.5 H1607 L1605.5 1076Z" fill="#d8d8d8"/>
<path d="M1621 1064.5 H1633 V1072 H1621Z" fill="#d8d8d8"/><rect x="1621" y="1062" width="5.5" height="1.2" fill="#d8d8d8"/>
<rect x="1648.5" y="1061.5" width="12" height="12" fill="none" stroke="#d8d8d8"/><path d="M1654.5 1064 V1071 M1651 1067.5 H1658" stroke="#d8d8d8" stroke-width="1.2"/>
<g fill="none" stroke="#d8d8d8" stroke-width="1"><path d="M1675.5 1063.5 H1686.5 M1678.5 1063.5 V1061.5 H1683.5 V1063.5 M1676.5 1064 V1074.5 H1685.5 V1064 M1678.8 1066 V1072.5 M1681 1066 V1072.5 M1683.2 1066 V1072.5"/></g>
</svg>

<!-- character panel -->
<div class="a" style="left:1161px;top:105px;width:227px;height:224px;background:#3a3a3a"></div>
<div class="a" style="left:1163px;top:106px;width:225px;height:222px;background:#535353"></div>
<div class="a" style="left:1163px;top:106px;width:225px;height:21px;background:#424242"></div>
<div class="a" style="left:1164px;top:110px;width:64px;height:17px;background:#535353"></div>
<div class="a" style="left:1228px;top:110px;width:67px;height:16px;background:#484848;border-left:1px solid #3d3d3d;border-right:1px solid #3d3d3d"></div>
<div class="t" style="left:1171px;top:111px;font-size:10.5px;font-weight:bold;color:#efefef">Character</div>
<div class="t" style="left:1235px;top:111px;font-size:10.5px;font-weight:bold;color:#bdbdbd">Paragraph</div>
<svg width="225" height="222" style="left:1163px;top:106px" viewBox="1163 106 225 222">
<path d="M1349.5 114.5 L1352.5 117.5 L1349.5 120.5 M1354.5 114.5 L1357.5 117.5 L1354.5 120.5" fill="none" stroke="#e0e0e0" stroke-width="1.6"/>
<path d="M1366.5 112 V123" stroke="#bdbdbd"/>
<g fill="#d8d8d8"><rect x="1373" y="113" width="10" height="1"/><rect x="1373" y="115" width="10" height="1"/><rect x="1373" y="117" width="10" height="1"/><rect x="1373" y="119" width="10" height="1"/></g>
<g fill="#454545" stroke="#606060">
<rect x="1168.5" y="140.5" width="124" height="17" rx="3"/>
<rect x="1302.5" y="140.5" width="80" height="17" rx="3"/>
<rect x="1188.5" y="165.5" width="82.5" height="17" rx="3"/>
<rect x="1306.5" y="165.5" width="76" height="17" rx="3"/>
<rect x="1188.5" y="186.5" width="82.5" height="17" rx="3"/>
<rect x="1306.5" y="186.5" width="76" height="17" rx="3"/>
<rect x="1189.5" y="208.5" width="54" height="15"/>
<rect x="1329.5" y="208.5" width="54" height="15"/>
<rect x="1190.5" y="229.5" width="54" height="15"/>
<rect x="1168.5" y="305.5" width="124" height="18" rx="3"/>
<rect x="1316.5" y="305.5" width="66.5" height="18" rx="3"/>
</g>
<g stroke="#606060"><path d="M1278.5 141 V157 M1368.5 141 V157 M1257.5 166 V182 M1368.5 166 V182 M1257.5 187 V203 M1368.5 187 V203"/></g>
<g fill="none" stroke="#dadada" stroke-width="1.1"><path d="M1282 149.5 L1285.5 152.5 L1289 149.5 M1372 149.5 L1375.5 152.5 L1379 149.5 M1261 174.5 L1264.5 177.5 L1268 174.5 M1372 174.5 L1375.5 177.5 L1379 174.5 M1261 195.5 L1264.5 198.5 L1268 195.5 M1372 195.5 L1375.5 198.5 L1379 195.5 M1280 314.5 L1283.5 317.5 L1287 314.5 M1371 314.5 L1374.5 317.5 L1378 314.5"/></g>
<rect x="1328.5" y="227.5" width="55" height="18.5" fill="#0c00a2" stroke="#444"/>
<rect x="1204.5" y="249.5" width="22.5" height="22.5" rx="3" fill="#383838" stroke="#484848"/>
<g fill="none" stroke="#dcdcdc" stroke-width="1">
<path d="M1292 172.5 H1303 M1292 182.5 H1303 M1288 174 V181 M1286.3 175.5 L1288 173.5 L1289.7 175.5 M1286.3 179.5 L1288 181.5 L1289.7 179.5"/>
<path d="M1173 200.5 H1182 M1175 198.5 L1172.5 200.5 L1175 202.5"/>
<path d="M1287 200.5 H1302 M1289 198.5 L1286.5 200.5 L1289 202.5 M1300 198.5 L1302.5 200.5 L1300 202.5"/>
<path d="M1171 209.5 V222 M1169 211.5 L1171 209 L1173 211.5 M1169 220 L1171 222.5 L1173 220"/>
<path d="M1309 223 H1325 M1311 221 L1308.5 223 L1311 225 M1323 221 L1325.5 223 L1323 225"/>
<path d="M1168.5 241.5 H1178 M1177.5 237.5 H1183 M1180 245.5 V239.5 M1178 241.5 L1180 239 L1182 241.5"/>
</g>
<g fill="#dcdcdc"><rect x="1298.5" y="187" width="3" height="10" fill="none"/><rect x="1286" y="187.5" width="17" height="9" rx="0" fill="#e2e2e2"/></g>
</svg>
<div class="t" style="left:1172px;top:143px;font-size:10.5px;color:#dedede">OPTIFrench Script</div>
<div class="t" style="left:1306px;top:143px;font-size:10.5px;color:#dedede">Regular</div>
<div class="t" style="left:1192px;top:168px;font-size:10.5px;color:#dedede">415 pt</div>
<div class="t" style="left:1310px;top:168px;font-size:10.5px;color:#dedede">42 pt</div>
<div class="t" style="left:1310px;top:189px;font-size:10.5px;color:#dedede">0</div>
<div class="t" style="left:1192px;top:210px;font-size:10.5px;color:#dedede">100%</div>
<div class="t" style="left:1332px;top:210px;font-size:10.5px;color:#dedede">100%</div>
<div class="t" style="left:1193px;top:231px;font-size:10.5px;color:#dedede">0 pt</div>
<div class="t" style="left:1295px;top:231px;font-size:10.5px;color:#d0d0d0">Color:</div>
<div class="t" style="left:1176px;top:308px;font-size:10.5px;color:#dedede">English: USA</div>
<div class="t" style="left:1324px;top:308px;font-size:10.5px;color:#dedede">Sharp</div>
<!-- char icons as glyphs -->
<div class="t" style="left:1175px;top:164px;font-family:'Liberation Serif';font-size:18px;line-height:18px;color:#dcdcdc">T</div>
<div class="t" style="left:1168px;top:172px;font-family:'Liberation Serif';font-size:10px;line-height:10px;color:#dcdcdc">T</div>
<div class="t" style="left:1295px;top:165px;font-family:'Liberation Sans';font-size:8px;line-height:8px;color:#dcdcdc">A</div>
<div class="t" style="left:1295px;top:174px;font-family:'Liberation Sans';font-size:8px;line-height:8px;color:#dcdcdc">A</div>
<div class="t" style="left:1168px;top:186px;font-size:12px;line-height:12px;color:#dcdcdc;letter-spacing:-1px">V/A</div>
<div class="t" style="left:1287px;top:187px;font-size:10px;line-height:10px;font-weight:bold;color:#535353;letter-spacing:-0.5px">VA</div>
<div class="t" style="left:1174px;top:207px;font-family:'Liberation Serif';font-size:18px;line-height:18px;color:#dcdcdc">T</div>
<div class="t" style="left:1310px;top:206px;font-family:'Liberation Serif';font-weight:bold;font-size:16px;line-height:16px;color:#dcdcdc">T</div>
<div class="t" style="left:1168px;top:230px;font-size:11px;line-height:11px;color:#dcdcdc">A</div>
<div class="t" style="left:1177px;top:229px;font-size:8px;line-height:8px;color:#dcdcdc">a</div>
<div class="t" style="left:1297px;top:306px;font-size:9px;line-height:9px;color:#dcdcdc">a</div>
<div class="t" style="left:1302px;top:309px;font-family:'Liberation Serif';font-size:12px;line-height:12px;color:#dcdcdc">a</div>
<div class="t" style="left:1185px;top:253px;font-family:'Liberation Serif';font-weight:bold;font-size:16px;line-height:16px;color:#e0e0e0">T</div>
<div class="t" style="left:1209px;top:253px;font-family:'Liberation Serif';font-style:italic;font-size:16px;line-height:16px;color:#e0e0e0">T</div>
<div class="t" style="left:1230px;top:253px;font-family:'Liberation Serif';font-weight:bold;font-size:16px;line-height:16px;color:#e0e0e0;letter-spacing:-1px">TT</div>
<div class="t" style="left:1256px;top:253px;font-family:'Liberation Serif';font-weight:bold;font-size:16px;line-height:16px;color:#e0e0e0">T<span style="font-size:10px">T</span></div>
<div class="t" style="left:1281px;top:253px;font-family:'Liberation Serif';font-weight:bold;font-size:16px;line-height:16px;color:#e0e0e0">T<span style="font-size:7px;position:relative;top:-6px">1</span></div>
<div class="t" style="left:1305px;top:253px;font-family:'Liberation Serif';font-weight:bold;font-size:16px;line-height:16px;color:#e0e0e0">T<span style="font-size:7px;position:relative;top:1px">1</span></div>
<div class="t" style="left:1329px;top:253px;font-family:'Liberation Serif';font-weight:bold;font-size:16px;line-height:16px;color:#e0e0e0;text-decoration:underline">T</div>
<div class="t" style="left:1353px;top:253px;font-family:'Liberation Serif';font-weight:bold;font-size:16px;line-height:16px;color:#e0e0e0;text-decoration:line-through">T</div>
<div class="t" style="left:1186px;top:280px;font-family:'Liberation Serif';font-size:16px;line-height:16px;color:#9c9c9c">fi</div>
<div class="t" style="left:1211px;top:280px;font-family:'Liberation Serif';font-style:italic;font-size:16px;line-height:16px;color:#9c9c9c">&#x1a1;</div>
<div class="t" style="left:1233px;top:280px;font-family:'Liberation Serif';font-size:16px;line-height:16px;color:#9c9c9c">st</div>
<div class="t" style="left:1257px;top:280px;font-family:'Liberation Serif';font-style:italic;font-size:16px;line-height:16px;color:#9c9c9c">A</div>
<div class="t" style="left:1280px;top:280px;font-family:'Liberation Serif';font-size:16px;line-height:16px;color:#9c9c9c">aa</div>
<div class="t" style="left:1307px;top:280px;font-family:'Liberation Serif';font-style:italic;font-size:16px;line-height:16px;color:#9c9c9c">T</div>
<div class="t" style="left:1329px;top:280px;font-family:'Liberation Serif';font-size:16px;line-height:16px;color:#9c9c9c">1<span style="font-size:9px;position:relative;top:-6px">st</span></div>
<div class="t" style="left:1353px;top:280px;font-family:'Liberation Serif';font-size:16px;line-height:16px;color:#9c9c9c">&#xbd;</div>
<svg width="30" height="6" style="left:1280px;top:281px" viewBox="1280 281 30 6"><path d="M1281 284.5 H1295 M1292 282.5 L1295 284.5 L1292 286.5" fill="none" stroke="#9c9c9c" stroke-width="1"/></svg>

</body></html>
